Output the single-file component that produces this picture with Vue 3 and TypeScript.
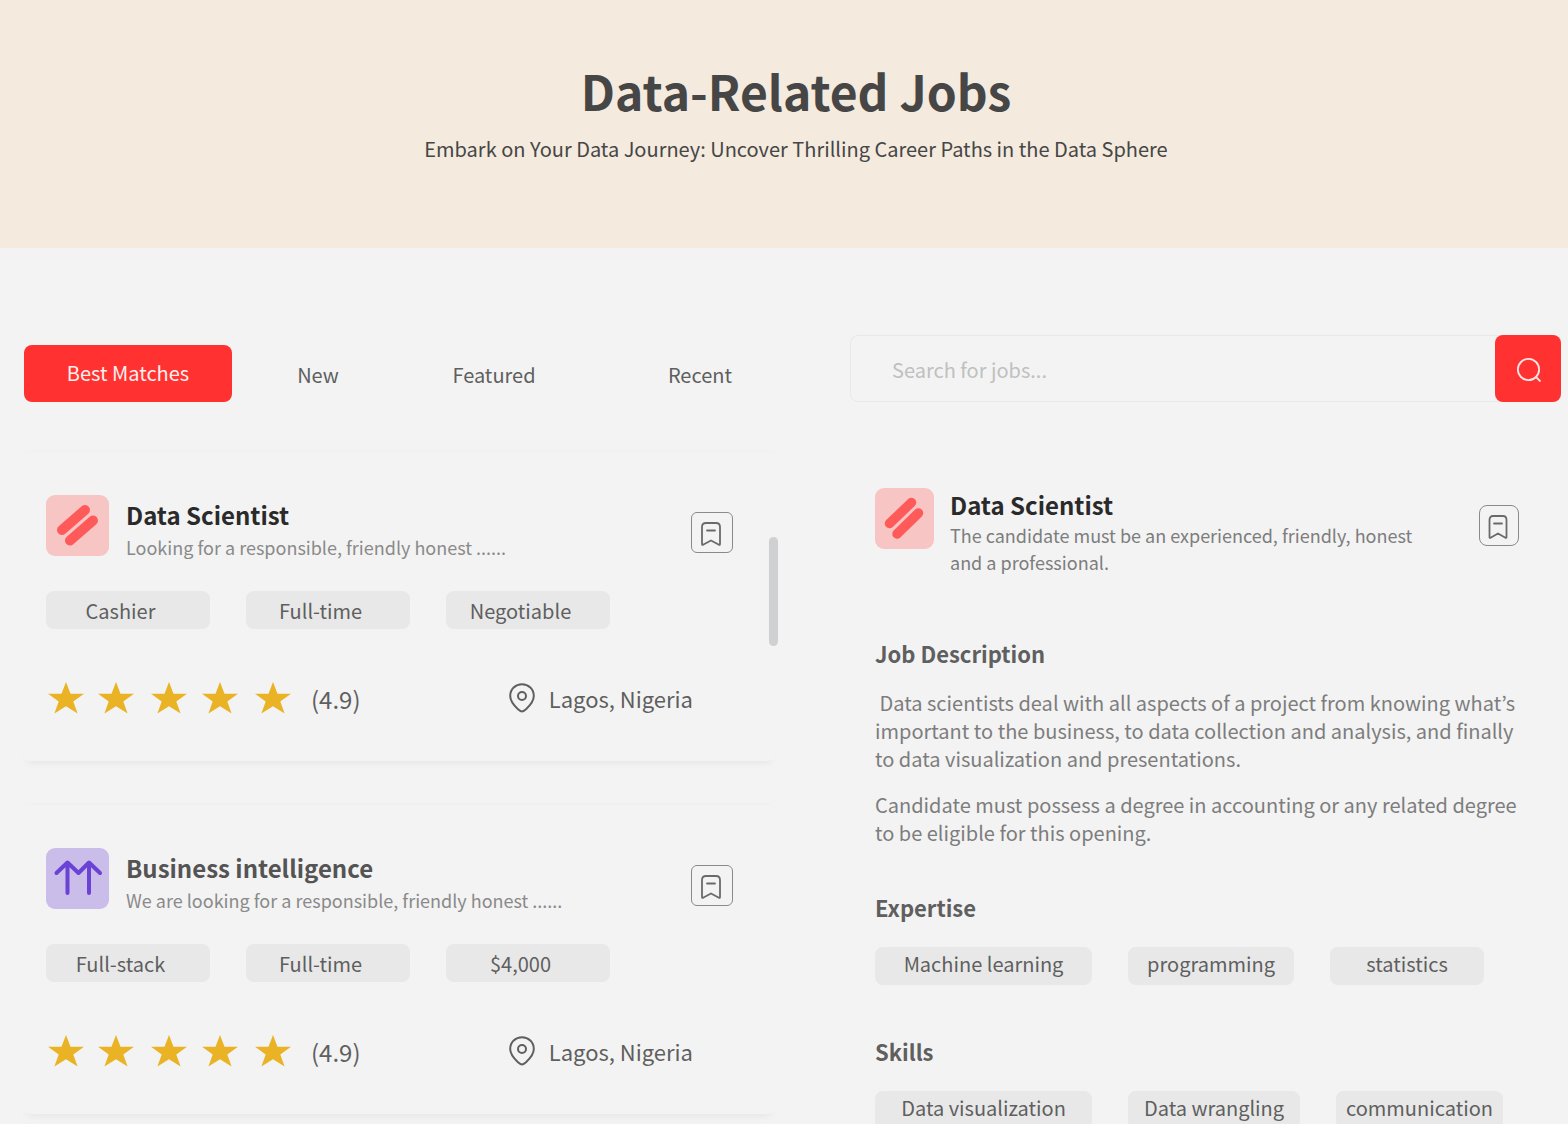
<script setup lang="ts">
import { ref } from 'vue'

interface Job {
  id: number
  title: string
  summary: string
  tags: string[]
  rating: string
  location: string
  logo: 'bars' | 'arrows'
}

interface Tag {
  label: string
  width: number
}

const tabs = ['Best Matches', 'New', 'Featured', 'Recent']
const activeTab = ref('Best Matches')
const query = ref('')

const jobs: Job[] = [
  {
    id: 1,
    title: 'Data Scientist',
    summary: 'Looking for a responsible, friendly honest ......',
    tags: ['Cashier', 'Full-time', 'Negotiable'],
    rating: '(4.9)',
    location: 'Lagos, Nigeria',
    logo: 'bars',
  },
  {
    id: 2,
    title: 'Business intelligence',
    summary: 'We are looking for a responsible, friendly honest ......',
    tags: ['Full-stack', 'Full-time', '$4,000'],
    rating: '(4.9)',
    location: 'Lagos, Nigeria',
    logo: 'arrows',
  },
]
const selectedId = ref(1)

const expertise: Tag[] = [
  { label: 'Machine learning', width: 217 },
  { label: 'programming', width: 166 },
  { label: 'statistics', width: 154 },
]
const skills: Tag[] = [
  { label: 'Data visualization', width: 217 },
  { label: 'Data wrangling', width: 172 },
  { label: 'communication', width: 167 },
]

const starOffsets = [0, 50, 103, 154, 207]
</script>

<template>
  <div class="page">
    <header class="hero">
      <h1>Data-Related Jobs</h1>
      <p>Embark on Your Data Journey: Uncover Thrilling Career Paths in the Data Sphere</p>
    </header>

    <main class="columns">
      <section class="left" aria-label="Job list">
        <nav class="tabs">
          <button
            v-for="tab in tabs"
            :key="tab"
            type="button"
            class="tab"
            :class="{ active: tab === activeTab }"
            @click="activeTab = tab"
          >{{ tab }}</button>
        </nav>

        <div class="list">
          <article
            v-for="job in jobs"
            :key="job.id"
            class="card"
            :class="{ selected: job.id === selectedId }"
            @click="selectedId = job.id"
          >
            <div class="card-head">
              <svg v-if="job.logo === 'bars'" class="logo" viewBox="0 0 63 61" aria-hidden="true">
                <rect width="63" height="61" rx="9" fill="#f6c5c4" />
                <g stroke="#ff5a5a" stroke-width="10" stroke-linecap="round">
                  <path d="M16 35 39 15" />
                  <path d="M24 45.500 47 25.500" />
                </g>
              </svg>
              <svg v-else class="logo" viewBox="0 0 63 61" aria-hidden="true">
                <rect width="63" height="61" rx="9" fill="#cabde9" />
                <path
                  d="M10.500 25 21.500 14.500 32.500 25 43 14.500 54 25M21.500 15V45M43 15V45"
                  fill="none" stroke="#6b42d6" stroke-width="4" stroke-linecap="round" stroke-linejoin="round"
                />
              </svg>
              <div class="heading">
                <h2>{{ job.title }}</h2>
                <p>{{ job.summary }}</p>
              </div>
              <button type="button" class="save" aria-label="Save job">
                <svg viewBox="0 0 20 24" aria-hidden="true">
                  <path d="M1 22V5Q1 1 5 1H15Q19 1 19 5V22Q19 23.500 17.500 22.500L10 18.500 2.500 22.500Q1 23.500 1 22ZM6 8.500H14" />
                </svg>
              </button>
            </div>

            <ul class="tags">
              <li v-for="tag in job.tags" :key="tag">{{ tag }}</li>
            </ul>

            <div class="meta">
              <svg class="stars" viewBox="0 0 247 34" role="img" aria-label="5 stars">
                <polygon
                  v-for="x in starOffsets"
                  :key="x"
                  :transform="`translate(${x} 0)`"
                  points="20,1 24.500,12.800 38,12.800 27.300,20.500 31.600,32.500 20,25.200 8.400,32.500 12.700,20.500 2,12.800 15.500,12.800"
                />
              </svg>
              <span class="rating">{{ job.rating }}</span>
              <svg class="pin" viewBox="0 0 26 30" aria-hidden="true">
                <path d="M13 28.500C11.500 28.500 10.500 27.500 9 26.200 5 22.500 1.200 18.500 1.200 13 1.200 6 6.500 1.300 13 1.300S24.800 6 24.800 13C24.800 18.500 21 22.500 17 26.200 15.500 27.500 14.500 28.500 13 28.500Z" />
                <circle cx="13" cy="13" r="4" />
              </svg>
              <span class="place">{{ job.location }}</span>
            </div>
          </article>
          <div class="thumb"></div>
        </div>
      </section>

      <section class="right" aria-label="Job details">
        <form class="search" role="search" @submit.prevent>
          <input v-model="query" type="search" placeholder="Search for jobs..." aria-label="Search for jobs" />
          <button type="submit" aria-label="Search">
            <svg viewBox="0 0 24 24" aria-hidden="true">
              <circle cx="11.500" cy="11.500" r="10.600" />
              <path d="M18.500 18.500 23.500 23.500" />
            </svg>
          </button>
        </form>

        <article class="detail">
          <div class="detail-head">
            <svg class="logo" viewBox="0 0 59 61" aria-hidden="true">
              <rect width="59" height="61" rx="9" fill="#f6c5c4" />
              <g stroke="#ff5a5a" stroke-width="9.500" stroke-linecap="round">
                <path d="M14.500 35.500 36.500 14.500" />
                <path d="M22 46 43.500 25" />
              </g>
            </svg>
            <div class="heading">
              <h2>Data Scientist</h2>
              <p>The candidate must be an experienced, friendly, honest and a professional.</p>
            </div>
            <button type="button" class="save" aria-label="Save job">
              <svg viewBox="0 0 20 24" aria-hidden="true">
                <path d="M1.500 22V5Q1.500 1 5 1H15Q18.500 1 18.500 5V22Q18.500 23.500 17 22.500L10 18.500 3 22.500Q1.500 23.500 1.500 22ZM6 8.500H14" />
              </svg>
            </button>
          </div>

          <h3>Job Description</h3>
          <p class="body">&nbsp;Data scientists deal with all aspects of a project from knowing what’s important to the business, to data collection and analysis, and finally to data visualization and presentations.</p>
          <p class="body">Candidate must possess a degree in accounting or any related degree to be eligible for this opening.</p>

          <h3>Expertise</h3>
          <ul class="tags">
            <li v-for="tag in expertise" :key="tag.label" :style="{ width: tag.width + 'px' }">{{ tag.label }}</li>
          </ul>

          <h3>Skills</h3>
          <ul class="tags">
            <li v-for="tag in skills" :key="tag.label" :style="{ width: tag.width + 'px' }">{{ tag.label }}</li>
          </ul>
        </article>
      </section>
    </main>
  </div>
</template>

<style>
body {
  background: #f3f3f3;
}
</style>

<style scoped>
.page {
  font-family: "Noto Sans CJK KR", "Noto Sans", sans-serif;
  font-size: 20px;
  line-height: 28px;
  color: #5f5f5f;
  background: #f3f3f3;
}

h1, h2, h3, p, ul {
  margin: 0;
  padding: 0;
}

button, input {
  font: inherit;
  color: inherit;
  margin: 0;
  padding: 0;
  border: 0;
  background: none;
}

button {
  cursor: pointer;
}

svg {
  display: block;
  flex: none;
}

.hero {
  box-sizing: border-box;
  min-height: 248px;
  padding: 58px 0 0 24px;
  text-align: center;
  color: #464646;
  background: #f4eade;
}

.hero h1 {
  font-size: 48px;
  line-height: 64px;
  font-weight: 700;
}

.hero p {
  margin-top: 13px;
}

.columns {
  display: grid;
  grid-template-columns: 758fr 711fr;
  column-gap: 72px;
  padding: 87px 7px 0 20px;
}

.tabs {
  display: flex;
  align-items: center;
  padding: 10px 0 0 4px;
  height: 57px;
}

.tab {
  height: 57px;
  padding-top: 2px;
}

.tab:nth-child(1) { width: 208px; }
.tab:nth-child(2) { width: 172px; }
.tab:nth-child(3) { width: 180px; }
.tab:nth-child(4) { margin-left: auto; margin-right: 46px; }

.tab.active {
  padding: 0 0 2px;
  color: #fff0ee;
  background: #ff3131;
  border-radius: 8px;
}

.list {
  position: relative;
  display: flex;
  flex-direction: column;
  gap: 44px;
  margin-top: 50px;
}

.card {
  box-sizing: border-box;
  min-height: 309px;
  padding: 43px 45px 43px 26px;
  border-radius: 10px;
  background: #f3f3f3;
  box-shadow: 0 8px 8px -7px rgba(0, 0, 0, 0.07), 0 -4px 6px -5px rgba(0, 0, 0, 0.04);
}

.thumb {
  position: absolute;
  top: 85px;
  right: 0;
  width: 9px;
  height: 109px;
  border-radius: 5px;
  background: #cfd0d2;
}

.card-head, .detail-head {
  display: flex;
  align-items: flex-start;
}

.card .logo {
  width: 63px;
  height: 61px;
}

.heading {
  flex: 1;
}

.card .heading {
  padding: 5px 0 0 17px;
}

.heading h2 {
  font-size: 24px;
  line-height: 30px;
  font-weight: 700;
  color: #545454;
}

.card.selected h2, .detail h2 {
  color: #2a2a2a;
}

.heading p {
  font-size: 18px;
  line-height: 27px;
  color: #8a8a8a;
}

.card .heading p {
  margin-top: 4px;
}

.save {
  display: flex;
  align-items: center;
  justify-content: center;
  box-sizing: border-box;
  width: 42px;
  height: 41px;
  margin-top: 17px;
  padding: 3px 2px 0 0;
  border: 1px solid #8a8a8a;
  border-radius: 6px;
}

.save svg {
  width: 20px;
  height: 24px;
  fill: none;
  stroke: #6a6a6a;
  stroke-width: 1.8;
  stroke-linecap: round;
  stroke-linejoin: round;
}

.tags {
  display: flex;
  gap: 36px;
  list-style: none;
}

.tags li {
  box-sizing: border-box;
  height: 38px;
  line-height: 34px;
  border-radius: 8px;
  text-align: center;
  white-space: nowrap;
  background: #e8e8e8;
}

.card .tags {
  margin-top: 30px;
}

.card .tags li {
  width: 164px;
  padding: 3px 15px 0 0;
}

.meta {
  display: flex;
  align-items: center;
  margin-top: 50px;
  font-size: 24px;
  line-height: 36px;
}

.stars {
  width: 247px;
  height: 34px;
  fill: #eab325;
}

.rating {
  margin-left: 18px;
  padding-top: 2px;
}

.pin {
  width: 26px;
  height: 30px;
  margin-left: auto;
  fill: none;
  stroke: #5f5f5f;
  stroke-width: 2;
}

.place {
  margin: 0 40px 0 14px;
  font-size: 22px;
}

.search {
  display: flex;
  border: 1px solid #e8e8e8;
  border-radius: 8px;
}

.search input {
  flex: 1;
  min-width: 0;
  height: 65px;
  padding: 1px 0 0 41px;
  box-sizing: border-box;
  outline: none;
  appearance: none;
}

.search input::placeholder {
  color: #c0c0c0;
  opacity: 1;
}

.search button {
  display: flex;
  align-items: center;
  justify-content: center;
  box-sizing: border-box;
  width: 66px;
  height: 67px;
  margin: -1px;
  padding: 2px 0 0 1px;
  border-radius: 8px;
  background: #ff3131;
}

.search button svg {
  width: 24px;
  height: 24px;
  fill: none;
  stroke: #ffe6e4;
  stroke-width: 1.8;
}

.detail {
  padding: 86px 34px 0 25px;
}

.detail .logo {
  width: 59px;
  height: 61px;
}

.detail-head {
  margin-bottom: 61px;
  padding-right: 8px;
}

.detail .heading {
  padding: 2px 48px 0 16px;
}

.detail .heading p {
  margin-top: 2px;
  color: #7d7d7d;
}

.detail .save {
  width: 40px;
  border-radius: 8px;
}

h3 {
  font-size: 22px;
  line-height: 32px;
  font-weight: 700;
}

.body + h3 {
  margin-top: 44px;
}

.tags + h3 {
  margin-top: 50px;
}

.body {
  margin-top: 18px;
  color: #7d7d7d;
}

h3 + .body {
  margin-top: 20px;
}

.detail .tags {
  margin-top: 24px;
}
</style>
